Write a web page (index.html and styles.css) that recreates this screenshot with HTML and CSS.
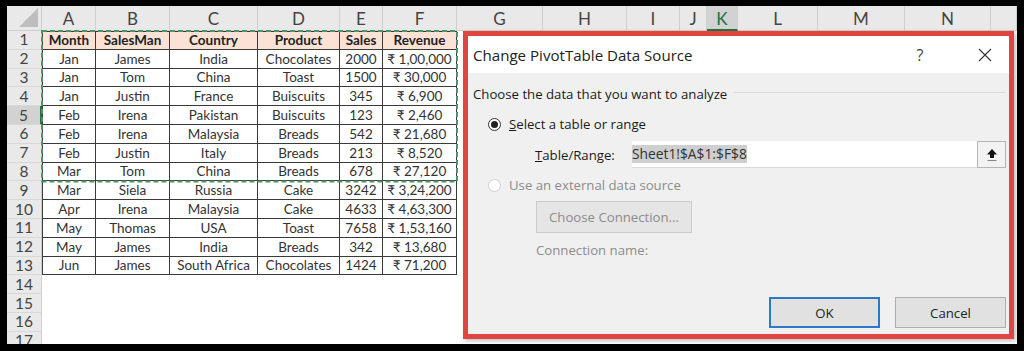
FILE: index.html
```html
<!DOCTYPE html>
<html>
<head>
<meta charset="utf-8">
<link rel="stylesheet" href="styles.css">
</head>
<body>
<div class="frame">
  <div class="sheet">
    <div class="corner"><span class="tri"></span></div>
    <div class="ch">A</div><div class="ch">B</div><div class="ch">C</div><div class="ch">D</div><div class="ch">E</div><div class="ch">F</div><div class="ch">G</div><div class="ch">H</div><div class="ch">I</div><div class="ch">J</div><div class="ch sel">K</div><div class="ch">L</div><div class="ch">M</div><div class="ch">N</div><div class="ch"></div>

    <div class="rh">1</div><div class="c a hd top">Month</div><div class="c hd top">SalesMan</div><div class="c hd top">Country</div><div class="c hd top">Product</div><div class="c hd top">Sales</div><div class="c hd top">Revenue</div><div class="fill"></div>
    <div class="rh">2</div><div class="c a">Jan</div><div class="c">James</div><div class="c">India</div><div class="c">Chocolates</div><div class="c">2000</div><div class="c">₹ 1,00,000</div><div class="fill"></div>
    <div class="rh">3</div><div class="c a">Jan</div><div class="c">Tom</div><div class="c">China</div><div class="c">Toast</div><div class="c">1500</div><div class="c">₹ 30,000</div><div class="fill"></div>
    <div class="rh">4</div><div class="c a">Jan</div><div class="c">Justin</div><div class="c">France</div><div class="c">Buiscuits</div><div class="c">345</div><div class="c">₹ 6,900</div><div class="fill"></div>
    <div class="rh sel">5</div><div class="c a">Feb</div><div class="c">Irena</div><div class="c">Pakistan</div><div class="c">Buiscuits</div><div class="c">123</div><div class="c">₹ 2,460</div><div class="fill"></div>
    <div class="rh">6</div><div class="c a">Feb</div><div class="c">Irena</div><div class="c">Malaysia</div><div class="c">Breads</div><div class="c">542</div><div class="c">₹ 21,680</div><div class="fill"></div>
    <div class="rh">7</div><div class="c a">Feb</div><div class="c">Justin</div><div class="c">Italy</div><div class="c">Breads</div><div class="c">213</div><div class="c">₹ 8,520</div><div class="fill"></div>
    <div class="rh">8</div><div class="c a">Mar</div><div class="c">Tom</div><div class="c">China</div><div class="c">Breads</div><div class="c">678</div><div class="c">₹ 27,120</div><div class="fill"></div>
    <div class="rh">9</div><div class="c a">Mar</div><div class="c">Siela</div><div class="c">Russia</div><div class="c">Cake</div><div class="c">3242</div><div class="c">₹ 3,24,200</div><div class="fill"></div>
    <div class="rh">10</div><div class="c a">Apr</div><div class="c">Irena</div><div class="c">Malaysia</div><div class="c">Cake</div><div class="c">4633</div><div class="c">₹ 4,63,300</div><div class="fill"></div>
    <div class="rh">11</div><div class="c a">May</div><div class="c">Thomas</div><div class="c">USA</div><div class="c">Toast</div><div class="c">7658</div><div class="c">₹ 1,53,160</div><div class="fill"></div>
    <div class="rh">12</div><div class="c a">May</div><div class="c">James</div><div class="c">India</div><div class="c">Breads</div><div class="c">342</div><div class="c">₹ 13,680</div><div class="fill"></div>
    <div class="rh">13</div><div class="c a">Jun</div><div class="c">James</div><div class="c">South Africa</div><div class="c">Chocolates</div><div class="c">1424</div><div class="c">₹ 71,200</div><div class="fill"></div>
    <div class="rh">14</div><div class="blank"></div>
    <div class="rh">15</div><div class="blank"></div>
    <div class="rh">16</div><div class="blank"></div>
    <div class="rh">17</div><div class="blank"></div>
  </div>

  <div class="ants">
    <svg width="417" height="153" viewBox="0 0 417 153"><rect x="1" y="1" width="415" height="150.4" fill="none" stroke="#4a9669" stroke-width="2" stroke-dasharray="5 3"/></svg>
  </div>

  <div class="dialog">
    <div class="titlebar">
      <span class="title">Change PivotTable Data Source</span>
      <span class="help">?</span>
      <span class="close"><svg width="14" height="14" viewBox="0 0 14 14"><path d="M1 1 L13 13 M13 1 L1 13" stroke="#333" stroke-width="1.1" fill="none"/></svg></span>
    </div>
    <div class="dbody">
      <div class="legend"><span>Choose the data that you want to analyze</span><span class="gline"></span></div>
      <div class="opt"><span class="radio on"><span class="dot"></span></span><span class="olabel"><u>S</u>elect a table or range</span></div>
      <div class="range">
        <span class="rlabel"><u>T</u>able/Range:</span>
        <span class="input"><span class="seltext">Sheet1!$A$1:$F$8</span></span>
        <span class="upbtn"><svg width="12" height="14" viewBox="0 0 12 14"><polygon points="6,1 11,6.5 8,6.5 8,10 4,10 4,6.5 1,6.5" fill="#111"/><line x1="1.5" y1="12.5" x2="10.5" y2="12.5" stroke="#888" stroke-width="1"/></svg></span>
      </div>
      <div class="opt dis"><span class="radio"></span><span class="olabel">Use an external data source</span></div>
      <div class="connbtn">Choose Connection...</div>
      <div class="connname">Connection name:</div>
      <div class="footer">
        <span class="btn ok">OK</span>
        <span class="btn">Cancel</span>
      </div>
    </div>
  </div>
</div>
</body>
</html>
```

FILE: styles.css
```css
html, body {
  margin: 0;
  padding: 0;
  background: #000;
}

.frame {
  position: relative;
  margin: 6px 0 0 7px;
  width: 1010px;
  height: 338px;
  overflow: hidden;
  background: #fff;
}

.sheet {
  display: grid;
  grid-template-columns: 35px 54px 74px 88px 82px 43px 74px 86px 84px 53px 27px 31px 80px 87px 86px 26px;
  grid-template-rows: 25px repeat(17, 18.8px);
  font-family: Lato, "Noto Sans", sans-serif;
}

.corner {
  position: relative;
  background: #e9e9e9;
  border-right: 1px solid #cfcfcf;
  border-bottom: 1px solid #cfcfcf;
  box-sizing: border-box;
}
.corner .tri {
  position: absolute;
  right: 3px;
  bottom: 3px;
  width: 0;
  height: 0;
  border-left: 19px solid transparent;
  border-bottom: 19px solid #bdbdbd;
}

.ch {
  background: #e9e9e9;
  border-right: 1px solid #cfcfcf;
  border-bottom: 1px solid #cfcfcf;
  box-sizing: border-box;
  display: flex;
  align-items: center;
  justify-content: center;
  font-size: 17px;
  line-height: 20px;
  color: #444;
  padding-top: 2px;
}
.ch.sel {
  background: #d2d2d2;
  border-bottom: 2px solid #217346;
  color: #217346;
}

.rh {
  background: #e9e9e9;
  border-right: 1px solid #cfcfcf;
  border-bottom: 1px solid #d8d8d8;
  box-sizing: border-box;
  display: flex;
  align-items: center;
  justify-content: center;
  font-size: 15.5px;
  line-height: 17px;
  color: #444;
}
.rh.sel {
  background: #d2d2d2;
  border-right: 2px solid #217346;
}

.c {
  border-right: 1px solid #3a3a3a;
  border-bottom: 1px solid #3a3a3a;
  box-sizing: border-box;
  display: flex;
  align-items: center;
  justify-content: center;
  font-size: 13.5px;
  line-height: 16px;
  color: #333;
  white-space: nowrap;
}
.c.a { border-left: 1px solid #3a3a3a; }
.c.top { border-top: 1px solid #3a3a3a; }
.c.hd {
  background: #fbe2d5;
  font-weight: 700;
  color: #222;
}

.fill { grid-column: span 9; }
.blank { grid-column: span 15; }

.ants {
  position: absolute;
  left: 34px;
  top: 24px;
  width: 417px;
  height: 153px;
}
.ants svg { display: block; }

.dialog {
  position: absolute;
  left: 456px;
  top: 25px;
  width: 551px;
  height: 308px;
  box-sizing: border-box;
  border: 5px solid #e0463f;
  background: #f0f0f0;
  display: flex;
  flex-direction: column;
  font-family: "Open Sans", "Noto Sans", sans-serif;
  color: #1a1a1a;
  box-shadow: 2px 2px 4px rgba(0,0,0,0.25);
}

.titlebar {
  height: 37px;
  background: #fff;
  display: flex;
  align-items: center;
  padding: 0 1px 0 5px;
  flex: none;
}
.title {
  flex: 1;
  font-size: 15.1px;
  color: #222;
}
.help {
  width: 46px;
  text-align: center;
  font-size: 16px;
  color: #444;
}
.close {
  width: 46px;
  margin-left: 19px;
  display: flex;
  justify-content: center;
  align-items: center;
}
.close svg { display: block; }

.dbody {
  flex: 1;
  display: flex;
  flex-direction: column;
  padding: 0 3px 6px 5px;
  font-size: 13.2px;
}

.legend {
  margin-top: 13px;
  display: flex;
  align-items: center;
  line-height: 16px;
}
.gline {
  flex: 1;
  margin-left: 6px;
  border-top: 1px solid #dcdcdc;
  margin-top: -3px;
}

.opt {
  margin-top: 13px;
  padding-left: 15px;
  height: 18px;
  display: flex;
  align-items: center;
}
.opt.dis {
  margin-top: 8px;
  color: #8c8c8c;
}
.radio {
  width: 13px;
  height: 13px;
  box-sizing: border-box;
  border-radius: 50%;
  background: #fff;
  border: 1px solid #d0d0d0;
  display: flex;
  align-items: center;
  justify-content: center;
  flex: none;
}
.radio.on {
  border: 1px solid #333;
}
.radio .dot {
  width: 7px;
  height: 7px;
  border-radius: 50%;
  background: #222;
}
.olabel { margin-left: 8px; }

.range {
  margin-top: 8px;
  display: flex;
  align-items: center;
  height: 27px;
}
.rlabel {
  width: 97px;
  padding-left: 62px;
  flex: none;
}
.input {
  flex: 1;
  height: 27px;
  background: #fff;
  border-bottom: 1px solid #dadada;
  box-sizing: border-box;
  display: flex;
  align-items: center;
  font-size: 13.8px;
  color: #333;
}
.seltext {
  background: #cfcfcf;
  line-height: 18px;
}
.upbtn {
  width: 29px;
  height: 27px;
  box-sizing: border-box;
  border: 1px solid #b5b5b5;
  background: #f2f2f2;
  display: flex;
  align-items: center;
  justify-content: center;
  flex: none;
}
.upbtn svg { display: block; }

.connbtn {
  margin: 7px 0 0 63px;
  width: 156px;
  height: 32px;
  box-sizing: border-box;
  border: 1px solid #cccccc;
  background: #e5e5e5;
  color: #8c8c8c;
  display: flex;
  align-items: center;
  justify-content: center;
}

.connname {
  margin: 9px 0 0 63px;
  line-height: 16px;
  color: #8c8c8c;
}

.footer {
  margin-top: auto;
  display: flex;
  justify-content: flex-end;
  gap: 15px;
}
.btn {
  width: 111px;
  height: 31px;
  box-sizing: border-box;
  border: 1px solid #adadad;
  background: #e1e1e1;
  display: flex;
  align-items: center;
  justify-content: center;
  color: #222;
}
.btn.ok {
  border: 2px solid #2a7ac8;
}
```
